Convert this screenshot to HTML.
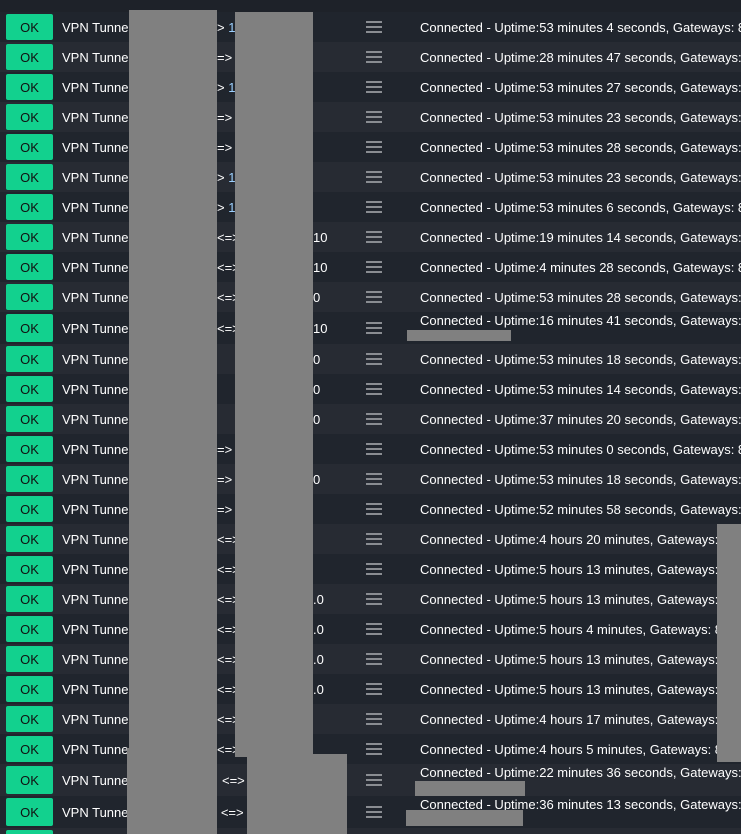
<!DOCTYPE html>
<html><head><meta charset="utf-8"><style>
html,body{margin:0;padding:0;background:#1e2229;width:741px;height:834px;overflow:hidden;position:relative;font-family:"Liberation Sans",sans-serif;font-size:13px;color:#fff}
.r{position:absolute;left:0;width:741px;height:30px;background:#20252d}
.r.l{background:#272b33}
.r.t{height:32px}
.ok{position:absolute;left:6px;top:2px;width:47px;bottom:2px;background:#12d18e;border-radius:2px;color:#111;text-align:center;font-size:13px;display:flex;align-items:center;justify-content:center}
.n{position:absolute;left:62px;top:8px;white-space:nowrap}
.m{position:absolute;left:217px;top:8px;white-space:nowrap}
.b{color:#9cd0ff}
.e{position:absolute;left:313px;top:8px}
.h{position:absolute;left:366px;top:9px;width:16px;height:12px;background:linear-gradient(#8a8d92 0 2px,transparent 2px 5px,#8a8d92 5px 7px,transparent 7px 10px,#8a8d92 10px 12px)}
.t .h{top:10px}
.s{position:absolute;left:420px;top:8px;white-space:nowrap}
.t .s{top:1px}
.t .n,.t .m,.t .e{top:9px}
.g{position:absolute;background:#808080}
</style></head><body>
<div class="r" style="top:12px"><div class="ok">OK</div><div class="n">VPN Tunnel</div><div class="m">&gt; <span class="b">1</span></div><div class="h"></div><div class="s">Connected - Uptime:53 minutes 4 seconds, Gateways: 8</div></div>
<div class="r l" style="top:42px"><div class="ok">OK</div><div class="n">VPN Tunnel</div><div class="m">=&gt;</div><div class="h"></div><div class="s">Connected - Uptime:28 minutes 47 seconds, Gateways:</div></div>
<div class="r" style="top:72px"><div class="ok">OK</div><div class="n">VPN Tunnel</div><div class="m">&gt; <span class="b">1</span></div><div class="h"></div><div class="s">Connected - Uptime:53 minutes 27 seconds, Gateways:</div></div>
<div class="r l" style="top:102px"><div class="ok">OK</div><div class="n">VPN Tunnel</div><div class="m">=&gt;</div><div class="h"></div><div class="s">Connected - Uptime:53 minutes 23 seconds, Gateways:</div></div>
<div class="r" style="top:132px"><div class="ok">OK</div><div class="n">VPN Tunnel</div><div class="m">=&gt;</div><div class="h"></div><div class="s">Connected - Uptime:53 minutes 28 seconds, Gateways:</div></div>
<div class="r l" style="top:162px"><div class="ok">OK</div><div class="n">VPN Tunnel</div><div class="m">&gt; <span class="b">1</span></div><div class="h"></div><div class="s">Connected - Uptime:53 minutes 23 seconds, Gateways:</div></div>
<div class="r" style="top:192px"><div class="ok">OK</div><div class="n">VPN Tunnel</div><div class="m">&gt; <span class="b">1</span></div><div class="h"></div><div class="s">Connected - Uptime:53 minutes 6 seconds, Gateways: 8</div></div>
<div class="r l" style="top:222px"><div class="ok">OK</div><div class="n">VPN Tunnel</div><div class="m">&lt;=&gt;</div><div class="e">10</div><div class="h"></div><div class="s">Connected - Uptime:19 minutes 14 seconds, Gateways:</div></div>
<div class="r" style="top:252px"><div class="ok">OK</div><div class="n">VPN Tunnel</div><div class="m">&lt;=&gt;</div><div class="e">10</div><div class="h"></div><div class="s">Connected - Uptime:4 minutes 28 seconds, Gateways: 8</div></div>
<div class="r l" style="top:282px"><div class="ok">OK</div><div class="n">VPN Tunnel</div><div class="m">&lt;=&gt;</div><div class="e">0</div><div class="h"></div><div class="s">Connected - Uptime:53 minutes 28 seconds, Gateways:</div></div>
<div class="r t" style="top:312px"><div class="ok">OK</div><div class="n">VPN Tunnel</div><div class="m">&lt;=&gt;</div><div class="e">10</div><div class="h"></div><div class="s">Connected - Uptime:16 minutes 41 seconds, Gateways:</div></div>
<div class="r l" style="top:344px"><div class="ok">OK</div><div class="n">VPN Tunnel</div><div class="e">0</div><div class="h"></div><div class="s">Connected - Uptime:53 minutes 18 seconds, Gateways:</div></div>
<div class="r" style="top:374px"><div class="ok">OK</div><div class="n">VPN Tunnel</div><div class="e">0</div><div class="h"></div><div class="s">Connected - Uptime:53 minutes 14 seconds, Gateways:</div></div>
<div class="r l" style="top:404px"><div class="ok">OK</div><div class="n">VPN Tunnel</div><div class="e">0</div><div class="h"></div><div class="s">Connected - Uptime:37 minutes 20 seconds, Gateways:</div></div>
<div class="r" style="top:434px"><div class="ok">OK</div><div class="n">VPN Tunnel</div><div class="m">=&gt;</div><div class="h"></div><div class="s">Connected - Uptime:53 minutes 0 seconds, Gateways: 8</div></div>
<div class="r l" style="top:464px"><div class="ok">OK</div><div class="n">VPN Tunnel</div><div class="m">=&gt;</div><div class="e">0</div><div class="h"></div><div class="s">Connected - Uptime:53 minutes 18 seconds, Gateways:</div></div>
<div class="r" style="top:494px"><div class="ok">OK</div><div class="n">VPN Tunnel</div><div class="m">=&gt;</div><div class="h"></div><div class="s">Connected - Uptime:52 minutes 58 seconds, Gateways:</div></div>
<div class="r l" style="top:524px"><div class="ok">OK</div><div class="n">VPN Tunnel</div><div class="m">&lt;=&gt;</div><div class="h"></div><div class="s">Connected - Uptime:4 hours 20 minutes, Gateways:</div></div>
<div class="r" style="top:554px"><div class="ok">OK</div><div class="n">VPN Tunnel</div><div class="m">&lt;=&gt;</div><div class="h"></div><div class="s">Connected - Uptime:5 hours 13 minutes, Gateways:</div></div>
<div class="r l" style="top:584px"><div class="ok">OK</div><div class="n">VPN Tunnel</div><div class="m">&lt;=&gt;</div><div class="e">.0</div><div class="h"></div><div class="s">Connected - Uptime:5 hours 13 minutes, Gateways:</div></div>
<div class="r" style="top:614px"><div class="ok">OK</div><div class="n">VPN Tunnel</div><div class="m">&lt;=&gt;</div><div class="e">.0</div><div class="h"></div><div class="s">Connected - Uptime:5 hours 4 minutes, Gateways: 8</div></div>
<div class="r l" style="top:644px"><div class="ok">OK</div><div class="n">VPN Tunnel</div><div class="m">&lt;=&gt;</div><div class="e">.0</div><div class="h"></div><div class="s">Connected - Uptime:5 hours 13 minutes, Gateways:</div></div>
<div class="r" style="top:674px"><div class="ok">OK</div><div class="n">VPN Tunnel</div><div class="m">&lt;=&gt;</div><div class="e">.0</div><div class="h"></div><div class="s">Connected - Uptime:5 hours 13 minutes, Gateways:</div></div>
<div class="r l" style="top:704px"><div class="ok">OK</div><div class="n">VPN Tunnel</div><div class="m">&lt;=&gt;</div><div class="h"></div><div class="s">Connected - Uptime:4 hours 17 minutes, Gateways:</div></div>
<div class="r" style="top:734px"><div class="ok">OK</div><div class="n">VPN Tunnel</div><div class="m">&lt;=&gt;</div><div class="h"></div><div class="s">Connected - Uptime:4 hours 5 minutes, Gateways: 8</div></div>
<div class="r l t" style="top:764px"><div class="ok">OK</div><div class="n">VPN Tunnel</div><div class="m" style="left:222px">&lt;=&gt;</div><div class="h"></div><div class="s">Connected - Uptime:22 minutes 36 seconds, Gateways:</div></div>
<div class="r t" style="top:796px"><div class="ok">OK</div><div class="n">VPN Tunnel</div><div class="m" style="left:210px">8 &lt;=&gt;</div><div class="h"></div><div class="s">Connected - Uptime:36 minutes 13 seconds, Gateways:</div></div>
<div class="r l" style="top:828px"><div class="ok">OK</div><div class="n">VPN Tunnel</div><div class="h"></div><div class="s">Connected - Uptime:4 hours 20 minutes, Gateways: 8</div></div>

<div class="g" style="left:129px;top:10px;width:88px;height:824px"></div>
<div class="g" style="left:127px;top:748px;width:90px;height:86px"></div>
<div class="g" style="left:235px;top:12px;width:78px;height:745px"></div>
<div class="g" style="left:247px;top:754px;width:100px;height:80px"></div>
<div class="g" style="left:717px;top:524px;width:24px;height:238px"></div>
<div class="g" style="left:407px;top:330px;width:104px;height:11px"></div>
<div class="g" style="left:415px;top:781px;width:110px;height:15px"></div>
<div class="g" style="left:406px;top:810px;width:117px;height:16px"></div>
</body></html>
